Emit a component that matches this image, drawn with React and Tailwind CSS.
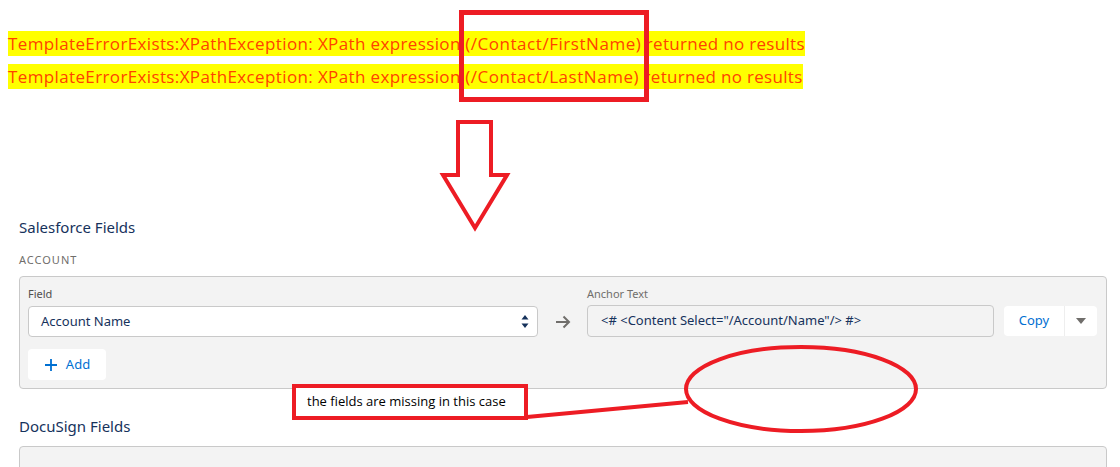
export default function App() {
  const red = '#ed1c24'
  return (
    <div className="relative h-[467px] w-[1120px] overflow-hidden bg-white font-['Open_Sans',sans-serif]">
      {/* error messages */}
      <div className="pl-[8px] pt-[31px] text-[17px] text-[#ff4200]">
        <div className="mb-[8px] w-fit whitespace-nowrap bg-[#ffff00] leading-[25px]">
          <span className="tracking-[0.37px]">TemplateErrorExists:XPathException: XPath expression</span>{' '}
          <span className="tracking-[0.55px]">(/Contact/FirstName)</span>{' '}
          <span className="tracking-[0.3px]">returned no results</span>
        </div>
        <div className="w-fit whitespace-nowrap bg-[#ffff00] leading-[25px]">
          <span className="tracking-[0.37px]">TemplateErrorExists:XPathException: XPath expression</span>{' '}
          <span className="tracking-[0.55px]">(/Contact/LastName)</span>{' '}
          <span className="tracking-[0.3px]">returned no results</span>
        </div>
      </div>

      <div className="pl-[19px] pr-[13px] pt-[126px] font-['Noto_Sans',sans-serif]">
        <h2 className="text-[15px] leading-[24px] text-[#16325c]">Salesforce Fields</h2>
        <p className="mt-[12px] text-[11px] leading-[18px] tracking-[1px] text-[#706e6b]">ACCOUNT</p>

        <div className="mt-[7px] h-[113px] rounded border border-[#c9c9c9] bg-[#f3f3f3] pl-[8px] pr-[9px] pt-[8px]">
          <div className="flex">
            <div className="w-[510px] shrink-0">
              <p className="text-[11px] leading-[18px] text-[#514f4d]">Field</p>
              <div className="mt-[3px] flex h-[31px] items-center justify-between rounded border border-[#c9c9c9] bg-white pl-[12px] pr-[8px]">
                <span className="text-[13px] text-[#16325c]">Account Name</span>
                <svg width="8" height="15" viewBox="0 0 8 15">
                  <path d="M4 1 L7.5 5.5 H0.5 Z M4 14 L7.5 9.5 H0.5 Z" fill="#16325c" />
                </svg>
              </div>
            </div>
            <div className="flex w-[49px] shrink-0 items-end justify-center pb-[8px]">
              <svg width="16" height="14" viewBox="0 0 16 14">
                <path d="M1 7 H14 M8.5 1.5 L14 7 L8.5 12.5" fill="none" stroke="#706e6b" strokeWidth="2" />
              </svg>
            </div>
            <div className="w-[407px] shrink-0">
              <p className="text-[11px] leading-[18px] text-[#706e6b]">Anchor Text</p>
              <div className="mt-[2px] flex h-[32px] items-center rounded border border-[#c9c9c9] bg-[#f3f3f3] pl-[13px]">
                <span className="text-[13px] text-[#16325c]">&lt;# &lt;Content Select="/Account/Name"/&gt; #&gt;</span>
              </div>
            </div>
            <div className="ml-[10px] mt-[21px] flex h-[30px] w-[93px] shrink-0 rounded bg-white">
              <button className="flex w-[61px] items-center justify-center border-r border-[#eeeeee] text-[13px] text-[#0070d2]">
                Copy
              </button>
              <button className="flex flex-1 items-center justify-center">
                <svg width="12" height="8" viewBox="0 0 12 8">
                  <path d="M1 1 H11 L6 7 Z" fill="#706e6b" />
                </svg>
              </button>
            </div>
          </div>
          <button className="mt-[12px] flex h-[31px] w-[78px] items-center justify-center gap-[8px] rounded bg-white text-[13px] text-[#0070d2]">
            <svg width="14" height="14" viewBox="0 0 14 14">
              <path d="M7 1 V13 M1 7 H13" stroke="#0070d2" strokeWidth="1.8" />
            </svg>
            Add
          </button>
        </div>

        <h2 className="mt-[25px] text-[15px] leading-[24px] text-[#16325c]">DocuSign Fields</h2>
        <div className="mt-[8px] h-[40px] rounded border border-[#c9c9c9] bg-[#f3f3f3]" />
      </div>

      {/* annotations */}
      <svg className="pointer-events-none absolute left-0 top-0" width="1120" height="467">
        <rect x="461.5" y="12.5" width="185" height="87" fill="none" stroke={red} strokeWidth="5" />
        <path d="M458 122 H491 V175 H507 L475 228 L443 175 H458 Z" fill="none" stroke={red} strokeWidth="4" strokeLinejoin="miter" />
        <line x1="527" y1="417" x2="688" y2="402" stroke={red} strokeWidth="4" />
        <ellipse cx="801" cy="389" rx="115" ry="42" fill="none" stroke={red} strokeWidth="4" />
      </svg>
      <div className="absolute left-[292px] top-[384px] flex h-[36px] w-[236px] items-center border-[4px] border-[#ed1c24] bg-white pl-[11px] font-['Open_Sans',sans-serif] text-[13px] text-black">
        the fields are missing in this case
      </div>
    </div>
  )
}
